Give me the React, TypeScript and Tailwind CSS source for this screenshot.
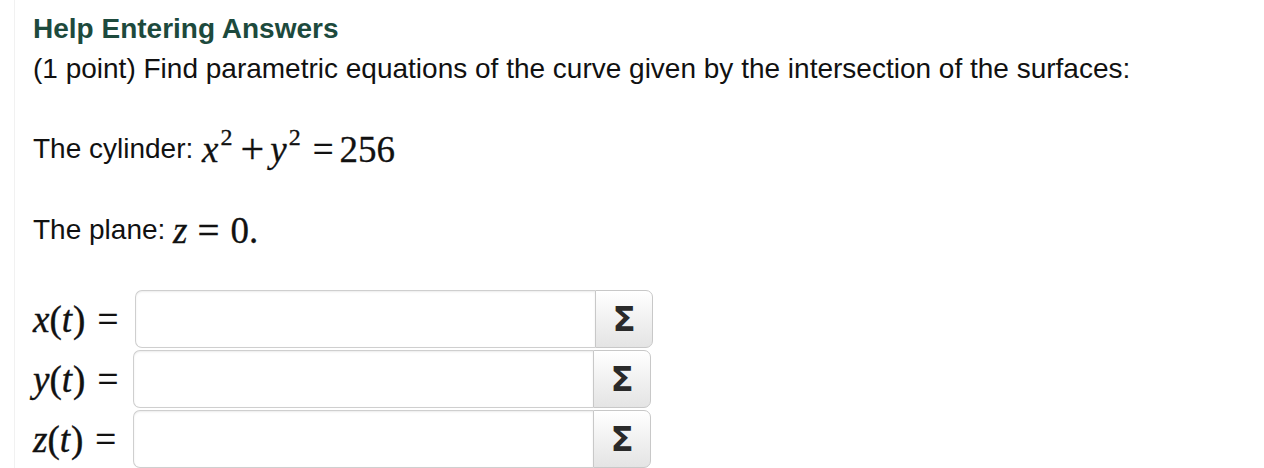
import React from "react";

const serif = { fontFamily: '"Liberation Serif", "Times New Roman", serif' };

function Sigma() {
  return (
    <button
      type="button"
      className="flex h-full w-[58px] shrink-0 items-center justify-center rounded-r-[7px] border border-[#c8c8c8] bg-gradient-to-b from-[#ffffff] to-[#e4e4e4] text-[#2a2a2a] shadow-[inset_0_1px_0_#fff]"
    >
      <span className="text-[34px] font-bold leading-none [font-family:'DejaVu_Sans',Arial,sans-serif]">Σ</span>
    </button>
  );
}

function Row({ v, shift }: { v: string; shift: boolean }) {
  return (
    <div className="flex h-[60px] items-center">
      <div className="flex w-[100px] shrink-0 items-center text-[37px] leading-none text-[#111] [-webkit-text-stroke:0.4px_#111]" style={serif}>
        <span className="italic">{v}</span>
        <span>(</span>
        <span className="italic">t</span>
        <span className="ml-[1px]">)</span>
        <span className="ml-[12px]">=</span>
      </div>
      <div className={`flex h-[58px] items-stretch ${shift ? "ml-[2px]" : "ml-0"}`}>
        <div className="w-[460px] rounded-l-[7px] border border-r-0 border-[#cfcfcf] bg-white shadow-[inset_0_1px_2px_rgba(0,0,0,0.08)]" />
        <Sigma />
      </div>
    </div>
  );
}

export default function App() {
  return (
    <div className="min-h-[468px] w-[1264px] overflow-hidden bg-white [font-family:'Liberation_Sans',Helvetica,Arial,sans-serif]">
      <div className="ml-[14px] h-[468px] overflow-hidden border-l border-[#f1f1f1] pl-[18px] pt-[9px] text-[28px] leading-[40px] text-[#111]">
        <div className="font-bold text-[#1d4a3d]">Help Entering Answers</div>
        <div>(1 point) Find parametric equations of the curve given by the intersection of the surfaces:</div>
        <div className="h-[40px]" />
        <div className="flex h-[40px] items-center">
          <span>The cylinder:&nbsp;</span>
          <span className="ml-[1px] flex items-center text-[37px] leading-none [-webkit-text-stroke:0.3px_#111]" style={serif}>
            <span className="italic">x</span>
            <span className="relative -top-[12px] ml-[2px] text-[24px]">2</span>
            <span className="ml-[8px] text-[42px]">+</span>
            <span className="ml-[6px] italic">y</span>
            <span className="relative -top-[12px] ml-[2px] text-[24px]">2</span>
            <span className="ml-[12px]">=</span>
            <span className="ml-[6px]">256</span>
          </span>
        </div>
        <div className="h-[41px]" />
        <div className="flex h-[40px] items-center">
          <span>The plane:&nbsp;</span>
          <span className="flex items-center text-[37px] leading-none [-webkit-text-stroke:0.3px_#111]" style={serif}>
            <span className="italic">z</span>
            <span className="ml-[10px] text-[39px]">=</span>
            <span className="ml-[11px]">0.</span>
          </span>
        </div>
        <div className="h-[40px]" />
        <div className="-mt-[1px]">
          <Row v="x" shift />
          <Row v="y" shift={false} />
          <Row v="z" shift={false} />
        </div>
      </div>
    </div>
  );
}
